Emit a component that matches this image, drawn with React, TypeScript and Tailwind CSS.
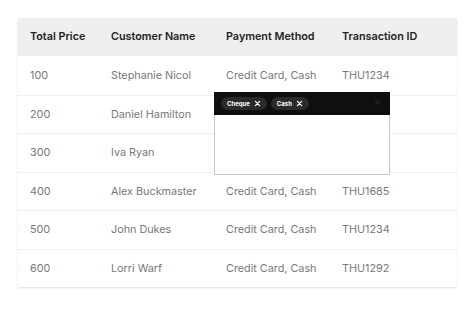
import React from "react";

const rows = [
  ["100", "Stephanie Nicol", "Credit Card, Cash", "THU1234"],
  ["200", "Daniel Hamilton", "Credit Card, Cash", "THU1234"],
  ["300", "Iva Ryan", "Credit Card, Cash", "THU1234"],
  ["400", "Alex Buckmaster", "Credit Card, Cash", "THU1685"],
  ["500", "John Dukes", "Credit Card, Cash", "THU1234"],
  ["600", "Lorri Warf", "Credit Card, Cash", "THU1292"],
];

function X() {
  return (
    <svg width="7" height="7" viewBox="0 0 10 10" className="ml-[4px]">
      <path d="M2 2 L8 8 M8 2 L2 8" stroke="#fff" strokeWidth="1.8" strokeLinecap="round" />
    </svg>
  );
}

export default function App() {
  return (
    <div className="w-[474px] h-[332px] bg-white relative" style={{ fontFamily: "Inter, 'Noto Sans', sans-serif" }}>
      <div className="pt-[18px] pl-[18px]">
        <div className="w-[439px] bg-white shadow-[0_1px_2px_rgba(0,0,0,0.12)]">
          <div className="grid grid-cols-[81px_115px_116px_1fr] pl-3 h-[38px] items-center bg-[#efefef] text-[10.8px] font-semibold text-[#222]">
            <div>Total Price</div>
            <div>Customer Name</div>
            <div>Payment Method</div>
            <div>Transaction ID</div>
          </div>
          {rows.map((r, i) => (
            <div
              key={i}
              className={`grid grid-cols-[81px_115px_116px_1fr] pl-3 h-[38.5px] items-center text-[10.8px] text-[#787878] ${i > 0 ? "border-t border-[#f1f1f1]" : ""}`}
            >
              <div className="pt-px">{r[0]}</div>
              <div className="pt-px">{r[1]}</div>
              <div className="pt-px">{r[2]}</div>
              <div className="pt-px">{r[3]}</div>
            </div>
          ))}
        </div>
      </div>
      <div className="absolute left-[214px] top-[92px] w-[176px] h-[83px] flex flex-col border border-[#c8c8c8] bg-white">
        <div className="h-[23px] bg-[#0f0f0f] flex items-center pl-[7px] gap-[4px] relative -mx-px -mt-px">
          <div className="h-[13px] px-[6px] rounded-full bg-[#2a2a2a] flex items-center text-white text-[6px] font-bold">
            Cheque<X />
          </div>
          <div className="h-[13px] px-[6px] rounded-full bg-[#2a2a2a] flex items-center text-white text-[6px] font-bold">
            Cash<X />
          </div>
          <div className="absolute right-[10px] top-[8px] w-[5px] h-[5px] rounded-full bg-[#1e1e1e]" />
        </div>
        <div className="flex-1" />
      </div>
    </div>
  );
}
